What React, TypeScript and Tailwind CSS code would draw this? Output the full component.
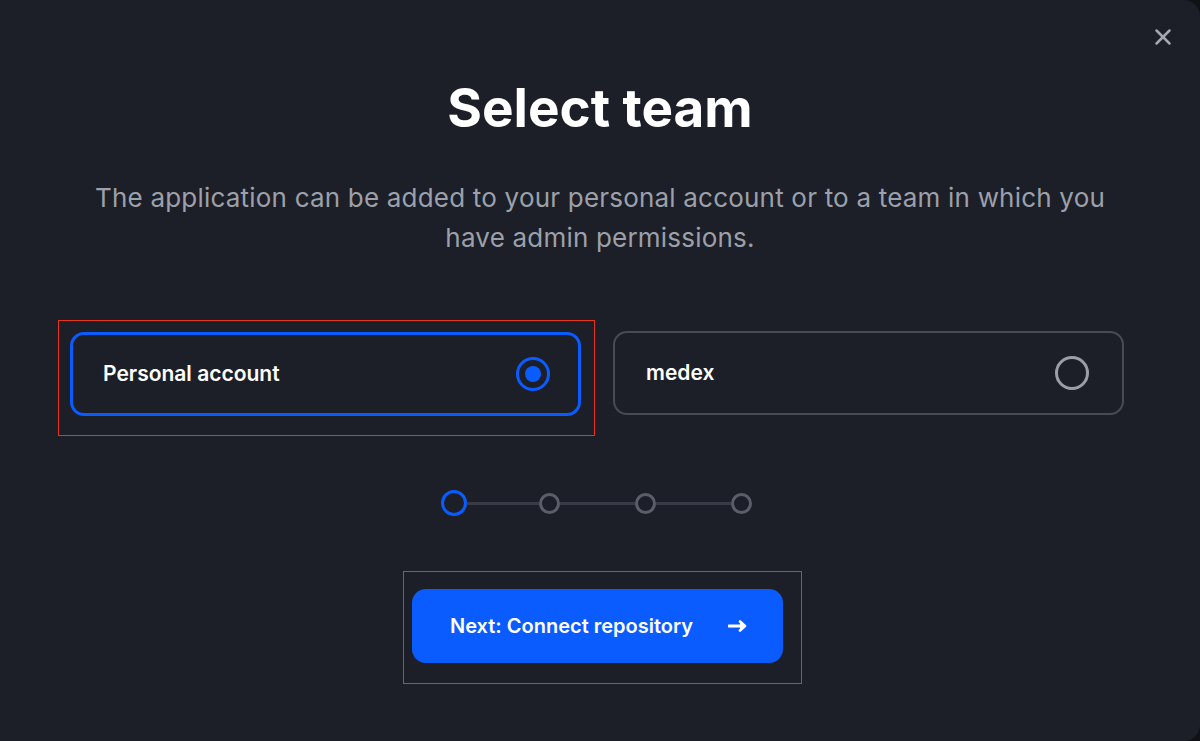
import { X } from 'lucide-react';

const steps = [true, false, false, false];

function Radio({ checked }: { checked: boolean }) {
  return checked ? (
    <span className="flex h-[34px] w-[34px] items-center justify-center rounded-full border-[3px] border-[#0a5cff]">
      <span className="h-[16px] w-[16px] rounded-full bg-[#0a5cff]" />
    </span>
  ) : (
    <span className="h-[34px] w-[34px] rounded-full border-[3px] border-[#9a9ea8]" />
  );
}

export default function App() {
  return (
    <div className="h-[741px] w-[1200px] bg-[#101216] font-['Inter',sans-serif]">
      <div className="relative flex h-full w-full flex-col items-center rounded-r-[16px] bg-[#1c1f27]">
        <button className="absolute right-[24px] top-[24px] text-[#a3a7b0]">
          <X size={26} strokeWidth={2.3} />
        </button>

        <h1 className="mt-[76px] text-[53px] font-bold leading-[64px] text-white">Select team</h1>

        <p className="mt-[38px] w-[1030px] text-center text-[26px] leading-[40px] tracking-[0.2px] text-[#9ca0aa]">
          The application can be added to your personal account or to a team in which you have admin permissions.
        </p>

        <div className="mt-[62px] flex w-full gap-[18px] pl-[58px]">
          <div className="border border-[#e8341c] p-[11px] pb-[19px] pr-[13px]">
            <div className="flex h-[84px] w-[511px] items-center justify-between rounded-[14px] border-[3px] border-[#0a5cff] pl-[30px] pr-[28px]">
              <span className="text-[21px] font-semibold text-white">Personal account</span>
              <Radio checked />
            </div>
          </div>
          <div className="mt-[11px] flex h-[84px] w-[511px] items-center justify-between rounded-[14px] border-2 border-[#484b55] pl-[31px] pr-[33px]">
            <span className="text-[21px] font-semibold text-white">medex</span>
            <Radio checked={false} />
          </div>
        </div>

        <div className="mr-[8px] mt-[54px] flex items-center">
          {steps.map((active, i) => (
            <div key={i} className="flex items-center">
              {i === 1 && <span className="h-[3px] w-[72px] bg-[#383b45]" />}
              {i > 1 && <span className="h-[3px] w-[75px] bg-[#383b45]" />}
              {active ? (
                <span className="h-[26px] w-[26px] rounded-full border-[3px] border-[#0a5cff]" />
              ) : (
                <span className="h-[21px] w-[21px] rounded-full border-[3px] border-[#5a5e69]" />
              )}
            </div>
          ))}
        </div>

        <div className="ml-[5px] mt-[55px] border border-[#e8341c] pb-[20px] pl-[8px] pr-[18px] pt-[17px]">
          <button className="flex h-[74px] w-[371px] items-center rounded-[14px] bg-[#0a5cff] pl-[38px] text-[20px] font-semibold text-white">
            <span>Next: Connect repository</span>
            <svg className="ml-[35px]" width="20" height="12" viewBox="0 0 20 12" fill="none">
              <path d="M1 6h15" stroke="white" strokeWidth="3" strokeLinecap="round" />
              <path d="M12 1.5 17 6l-5 4.5" stroke="white" strokeWidth="2.6" strokeLinecap="round" strokeLinejoin="round" fill="white" />
            </svg>
          </button>
        </div>
      </div>
    </div>
  );
}
